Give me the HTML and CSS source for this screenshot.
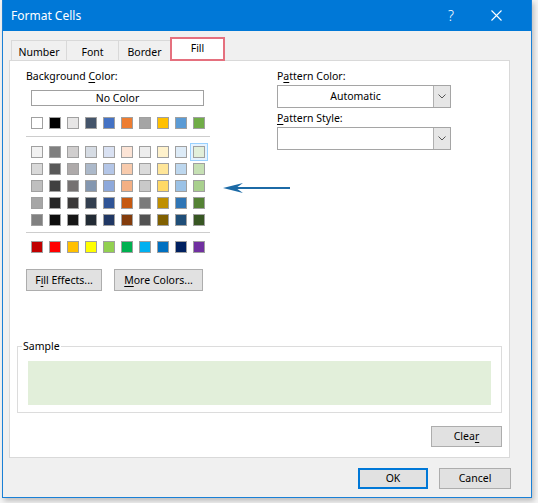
FILE: index.html
```html
<!DOCTYPE html>
<html>
<head>
<meta charset="utf-8">
<title>Format Cells</title>
<link rel="stylesheet" href="styles.css">
</head>
<body>
<div class="window">
  <div class="titlebar">
    <span class="title">Format Cells</span>
    <span class="help">?</span>
    <span class="close"><svg width="11" height="11" viewBox="0 0 11 11"><path d="M0.5 0.5 L10.5 10.5 M10.5 0.5 L0.5 10.5" stroke="#fff" stroke-width="1.1" fill="none"/></svg></span>
  </div>
  <div class="content">
    <div class="tabs">
      <div class="tab tab-number">Number</div>
      <div class="tab tab-font">Font</div>
      <div class="tab tab-border">Border</div>
      <div class="tab tab-fill active">Fill</div>
    </div>
    <div class="panel">
      <div class="panel-top">
        <div class="bg-col">
          <div class="label">Background <u>C</u>olor:</div>
          <div class="nocolor">No Color</div>
          <div class="swatches row0">
            <span class="sw" style="background:#ffffff"></span>
            <span class="sw" style="background:#000000"></span>
            <span class="sw" style="background:#e7e6e6"></span>
            <span class="sw" style="background:#44546a"></span>
            <span class="sw" style="background:#4472c4"></span>
            <span class="sw" style="background:#ed7d31"></span>
            <span class="sw" style="background:#a5a5a5"></span>
            <span class="sw" style="background:#ffc000"></span>
            <span class="sw" style="background:#5b9bd5"></span>
            <span class="sw" style="background:#70ad47"></span>
          </div>
          <div class="sep"></div>
          <div class="theme">
            <div class="swatches">
              <span class="sw" style="background:#f2f2f2"></span>
              <span class="sw" style="background:#7f7f7f"></span>
              <span class="sw" style="background:#d0cece"></span>
              <span class="sw" style="background:#d6dce4"></span>
              <span class="sw" style="background:#d9e1f2"></span>
              <span class="sw" style="background:#fce4d6"></span>
              <span class="sw" style="background:#ededed"></span>
              <span class="sw" style="background:#fff2cc"></span>
              <span class="sw" style="background:#ddebf7"></span>
              <span class="sw sel" style="background:#e2efda"></span>
            </div>
            <div class="swatches">
              <span class="sw" style="background:#d9d9d9"></span>
              <span class="sw" style="background:#595959"></span>
              <span class="sw" style="background:#aeaaaa"></span>
              <span class="sw" style="background:#acb9ca"></span>
              <span class="sw" style="background:#b4c6e7"></span>
              <span class="sw" style="background:#f8cbad"></span>
              <span class="sw" style="background:#dbdbdb"></span>
              <span class="sw" style="background:#ffe699"></span>
              <span class="sw" style="background:#bdd7ee"></span>
              <span class="sw" style="background:#c6e0b4"></span>
            </div>
            <div class="swatches">
              <span class="sw" style="background:#bfbfbf"></span>
              <span class="sw" style="background:#404040"></span>
              <span class="sw" style="background:#757171"></span>
              <span class="sw" style="background:#8497b0"></span>
              <span class="sw" style="background:#8ea9db"></span>
              <span class="sw" style="background:#f4b084"></span>
              <span class="sw" style="background:#c9c9c9"></span>
              <span class="sw" style="background:#ffd966"></span>
              <span class="sw" style="background:#9bc2e6"></span>
              <span class="sw" style="background:#a9d08e"></span>
            </div>
            <div class="swatches">
              <span class="sw" style="background:#a6a6a6"></span>
              <span class="sw" style="background:#262626"></span>
              <span class="sw" style="background:#3a3838"></span>
              <span class="sw" style="background:#333f4f"></span>
              <span class="sw" style="background:#305496"></span>
              <span class="sw" style="background:#c65911"></span>
              <span class="sw" style="background:#7b7b7b"></span>
              <span class="sw" style="background:#bf8f00"></span>
              <span class="sw" style="background:#2f75b5"></span>
              <span class="sw" style="background:#548235"></span>
            </div>
            <div class="swatches">
              <span class="sw" style="background:#808080"></span>
              <span class="sw" style="background:#0d0d0d"></span>
              <span class="sw" style="background:#161616"></span>
              <span class="sw" style="background:#222b35"></span>
              <span class="sw" style="background:#203764"></span>
              <span class="sw" style="background:#833c0c"></span>
              <span class="sw" style="background:#525252"></span>
              <span class="sw" style="background:#806000"></span>
              <span class="sw" style="background:#1f4e78"></span>
              <span class="sw" style="background:#375623"></span>
            </div>
          </div>
          <div class="sep sep2"></div>
          <div class="swatches std">
            <span class="sw" style="background:#c00000"></span>
            <span class="sw" style="background:#ff0000"></span>
            <span class="sw" style="background:#ffc000"></span>
            <span class="sw" style="background:#ffff00"></span>
            <span class="sw" style="background:#92d050"></span>
            <span class="sw" style="background:#00b050"></span>
            <span class="sw" style="background:#00b0f0"></span>
            <span class="sw" style="background:#0070c0"></span>
            <span class="sw" style="background:#002060"></span>
            <span class="sw" style="background:#7030a0"></span>
          </div>
          <div class="bg-buttons">
            <button class="btn btn-fill">F<u>i</u>ll Effects...</button>
            <button class="btn btn-more"><u>M</u>ore Colors...</button>
          </div>
        </div>
        <div class="pat-col">
          <div class="label">P<u>a</u>ttern Color:</div>
          <div class="combo">
            <span class="combo-text">Automatic</span>
            <span class="combo-btn"><svg width="8" height="5" viewBox="0 0 8 5"><path d="M0.5 0.5 L4 4 L7.5 0.5" stroke="#555" stroke-width="1" fill="none"/></svg></span>
          </div>
          <div class="label label2"><u>P</u>attern Style:</div>
          <div class="combo">
            <span class="combo-text"></span>
            <span class="combo-btn"><svg width="8" height="5" viewBox="0 0 8 5"><path d="M0.5 0.5 L4 4 L7.5 0.5" stroke="#555" stroke-width="1" fill="none"/></svg></span>
          </div>
        </div>
      </div>
      <svg class="arrow" width="68" height="12" viewBox="0 0 68 12"><path d="M12 6 H67" stroke="#1c6aa6" stroke-width="2"/><path d="M0 6 L20 1 L13 6 L20 11 Z" fill="#1c6aa6"/></svg>
      <fieldset class="sample">
        <legend>Sample</legend>
        <div class="sample-fill"></div>
      </fieldset>
      <div class="clear-row">
        <button class="btn btn-clear">Clea<u>r</u></button>
      </div>
    </div>
    <div class="footer">
      <button class="btn btn-ok">OK</button>
      <button class="btn btn-cancel">Cancel</button>
    </div>
  </div>
</div>
</body>
</html>
```

FILE: styles.css
```css
* { box-sizing: border-box; }
html, body { margin: 0; padding: 0; }
body {
  width: 538px;
  height: 503px;
  overflow: hidden;
  background: #f4f4f4;
  font-family: "Noto Sans", "Open Sans", sans-serif;
  font-size: 10.5px;
  color: #000;
}
u { text-decoration: underline; text-underline-offset: 2px; }

.window {
  margin-left: 2px;
  width: 530px;
  height: 498px;
  border: 1px solid #1a80d6;
  border-top: none;
  background: #f0f0f0;
  box-shadow: 2px 3px 5px rgba(0,0,0,0.22);
  display: flex;
  flex-direction: column;
}

.titlebar {
  height: 31px;
  background: #0078d7;
  color: #fff;
  display: flex;
  align-items: center;
  padding-left: 8px;
  padding-right: 23px;
  flex: none;
}
.title { font-size: 12px; line-height: 31px; }
.help {
  margin-left: auto;
  width: 24px;
  text-align: center;
  font-size: 14px;
  font-weight: 300;
  line-height: 31px;
}
.close {
  margin-left: 21px;
  width: 24px;
  height: 31px;
  display: flex;
  align-items: center;
  justify-content: center;
}

.content {
  flex: 1;
  padding: 9px 21px 0 6px;
  display: flex;
  flex-direction: column;
}

.tabs {
  display: flex;
  align-items: flex-start;
  height: 20px;
  margin-left: 2px;
  position: relative;
  z-index: 2;
}
.tab {
  height: 20px;
  border: 1px solid #d9d9d9;
  border-right: none;
  border-bottom: none;
  text-align: center;
  line-height: 20px;
  padding-top: 1px;
}
.tab-number { width: 55px; }
.tab-font { width: 52px; }
.tab-border { width: 52px; }
.tab.active {
  width: 55px;
  height: 24px;
  margin-top: -3px;
  background: #fff;
  border: 2px solid #e5707e;
  line-height: 18px;
  padding-top: 0;
}

.panel {
  height: 398px;
  width: 501px;
  border: 1px solid #d9d9d9;
  background: #fff;
  position: relative;
  display: flex;
  flex-direction: column;
}

.panel-top { display: flex; padding-top: 8px; }
.bg-col { width: 251px; padding-left: 16px; }
.pat-col { padding-left: 16px; width: 200px; }

.label { height: 14px; line-height: 14px; white-space: nowrap; }
.label2 { margin-top: 3px; }

.nocolor {
  margin: 7px 0 0 5px;
  width: 173px;
  height: 16px;
  border: 1px solid #a0a0a0;
  text-align: center;
  line-height: 14px;
}

.swatches { display: flex; gap: 6px; margin-left: 5px; }
.sw {
  display: block;
  width: 12px;
  height: 12px;
  border: 1px solid #a0a0a0;
}
.sw.sel {
  box-shadow: 0 0 0 2px #e5f3ff, 0 0 0 3px #99d1ff;
}
.row0 { margin-top: 11px; }

.sep { margin-top: 7px; width: 184px; height: 1px; background: #cdcdcd; }
.sep2 { margin-top: 6px; }

.theme { margin-top: 9px; display: flex; flex-direction: column; gap: 5px; }
.std { margin-top: 8px; }

.bg-buttons { margin-top: 16px; display: flex; gap: 12px; }

.btn {
  font-family: inherit;
  font-size: 10.5px;
  color: #000;
  background: #e1e1e1;
  border: 1px solid #adadad;
  height: 21px;
  padding: 0;
  margin: 0;
  line-height: 19px;
  text-align: center;
}
.btn-fill { width: 76px; height: 22px; }
.btn-more { width: 89px; height: 22px; }

.combo {
  margin-top: 2px;
  width: 174px;
  height: 23px;
  border: 1px solid #a5a5a5;
  display: flex;
}
.combo-text { flex: 1; text-align: center; line-height: 21px; }
.combo-btn {
  width: 17px;
  background: #e6e6e6;
  border-left: 1px solid #b0b0b0;
  display: flex;
  align-items: center;
  justify-content: center;
}

.arrow { position: absolute; left: 213px; top: 121px; }

.sample {
  margin: 48px 7px 0 7px;
  padding: 0;
  border: 1px solid #dcdcdc;
  min-width: 0;
}
.sample legend {
  margin-left: 4px;
  padding: 0 1px;
  line-height: 14px;
}
.sample-fill {
  margin: 8px 10px 7px 10px;
  height: 44px;
  background: #e2efda;
}

.clear-row { display: flex; justify-content: flex-end; margin-top: 13px; padding-right: 7px; }
.btn-clear { width: 71px; }

.footer {
  margin-top: 10px;
  margin-right: -1px;
  display: flex;
  justify-content: flex-end;
  gap: 11px;
}
.btn-ok { width: 70px; border: 2px solid #0078d7; line-height: 17px; }
.btn-cancel { width: 72px; }
```
